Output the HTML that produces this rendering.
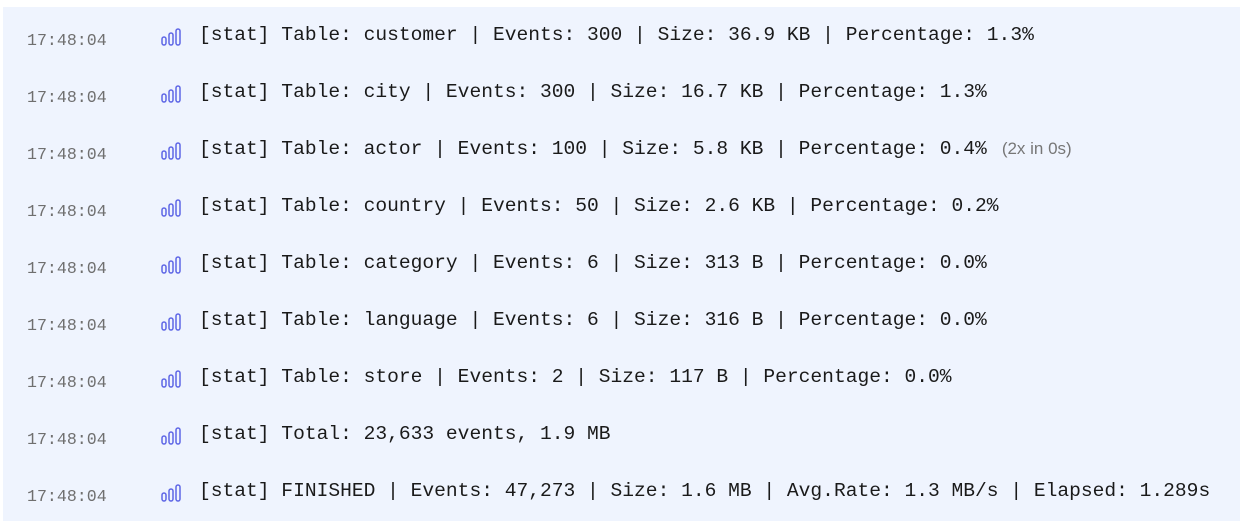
<!DOCTYPE html>
<html><head><style>
html,body{margin:0;padding:0;background:#fff;}
.wrap{position:absolute;left:3px;top:7px;width:1237px;height:514px;background:#eff4fe;}
.row{position:absolute;left:0;height:57px;width:1237px;}
.ts{position:absolute;left:24px;top:24px;font:16.6px/20px "Liberation Mono",monospace;color:#6f6f6f;}
.ic{position:absolute;left:158px;top:21px;}
.msg{position:absolute;left:196px;top:16px;font:19.6px/24px "Liberation Mono",monospace;color:#1a1a1a;white-space:pre;}
.rep{font:17px "Liberation Sans",sans-serif;color:#777;margin-left:15px;}
</style></head><body>
<div class="wrap">
<div class="row" style="top:0"><span class="ts">17:48:04</span><svg class="ic" width="20" height="18"><g fill="none" stroke="#5f67e6" stroke-width="1.5"><rect x="1" y="9" width="4" height="8" rx="2"/><rect x="8" y="5" width="4" height="12" rx="2"/><rect x="15" y="1" width="4" height="16" rx="2"/></g></svg><span class="msg">[stat] Table: customer | Events: 300 | Size: 36.9 KB | Percentage: 1.3%</span></div>
<div class="row" style="top:57px"><span class="ts">17:48:04</span><svg class="ic" width="20" height="18"><g fill="none" stroke="#5f67e6" stroke-width="1.5"><rect x="1" y="9" width="4" height="8" rx="2"/><rect x="8" y="5" width="4" height="12" rx="2"/><rect x="15" y="1" width="4" height="16" rx="2"/></g></svg><span class="msg">[stat] Table: city | Events: 300 | Size: 16.7 KB | Percentage: 1.3%</span></div>
<div class="row" style="top:114px"><span class="ts">17:48:04</span><svg class="ic" width="20" height="18"><g fill="none" stroke="#5f67e6" stroke-width="1.5"><rect x="1" y="9" width="4" height="8" rx="2"/><rect x="8" y="5" width="4" height="12" rx="2"/><rect x="15" y="1" width="4" height="16" rx="2"/></g></svg><span class="msg">[stat] Table: actor | Events: 100 | Size: 5.8 KB | Percentage: 0.4%<span class="rep">(2x in 0s)</span></span></div>
<div class="row" style="top:171px"><span class="ts">17:48:04</span><svg class="ic" width="20" height="18"><g fill="none" stroke="#5f67e6" stroke-width="1.5"><rect x="1" y="9" width="4" height="8" rx="2"/><rect x="8" y="5" width="4" height="12" rx="2"/><rect x="15" y="1" width="4" height="16" rx="2"/></g></svg><span class="msg">[stat] Table: country | Events: 50 | Size: 2.6 KB | Percentage: 0.2%</span></div>
<div class="row" style="top:228px"><span class="ts">17:48:04</span><svg class="ic" width="20" height="18"><g fill="none" stroke="#5f67e6" stroke-width="1.5"><rect x="1" y="9" width="4" height="8" rx="2"/><rect x="8" y="5" width="4" height="12" rx="2"/><rect x="15" y="1" width="4" height="16" rx="2"/></g></svg><span class="msg">[stat] Table: category | Events: 6 | Size: 313 B | Percentage: 0.0%</span></div>
<div class="row" style="top:285px"><span class="ts">17:48:04</span><svg class="ic" width="20" height="18"><g fill="none" stroke="#5f67e6" stroke-width="1.5"><rect x="1" y="9" width="4" height="8" rx="2"/><rect x="8" y="5" width="4" height="12" rx="2"/><rect x="15" y="1" width="4" height="16" rx="2"/></g></svg><span class="msg">[stat] Table: language | Events: 6 | Size: 316 B | Percentage: 0.0%</span></div>
<div class="row" style="top:342px"><span class="ts">17:48:04</span><svg class="ic" width="20" height="18"><g fill="none" stroke="#5f67e6" stroke-width="1.5"><rect x="1" y="9" width="4" height="8" rx="2"/><rect x="8" y="5" width="4" height="12" rx="2"/><rect x="15" y="1" width="4" height="16" rx="2"/></g></svg><span class="msg">[stat] Table: store | Events: 2 | Size: 117 B | Percentage: 0.0%</span></div>
<div class="row" style="top:399px"><span class="ts">17:48:04</span><svg class="ic" width="20" height="18"><g fill="none" stroke="#5f67e6" stroke-width="1.5"><rect x="1" y="9" width="4" height="8" rx="2"/><rect x="8" y="5" width="4" height="12" rx="2"/><rect x="15" y="1" width="4" height="16" rx="2"/></g></svg><span class="msg">[stat] Total: 23,633 events, 1.9 MB</span></div>
<div class="row" style="top:456px"><span class="ts">17:48:04</span><svg class="ic" width="20" height="18"><g fill="none" stroke="#5f67e6" stroke-width="1.5"><rect x="1" y="9" width="4" height="8" rx="2"/><rect x="8" y="5" width="4" height="12" rx="2"/><rect x="15" y="1" width="4" height="16" rx="2"/></g></svg><span class="msg">[stat] FINISHED | Events: 47,273 | Size: 1.6 MB | Avg.Rate: 1.3 MB/s | Elapsed: 1.289s</span></div>
</div>
</body></html>
